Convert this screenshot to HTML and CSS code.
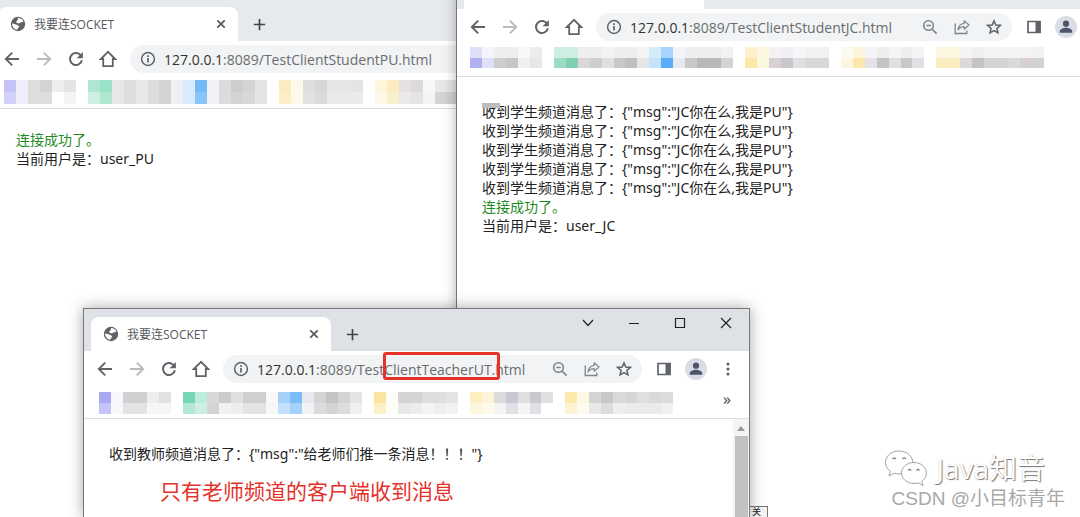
FILE: index.html
```html
<!DOCTYPE html>
<html lang="zh-CN">
<head>
<meta charset="utf-8">
<title>我要连SOCKET</title>
<link rel="stylesheet" href="styles.css">
</head>
<body>
<svg class="defs" aria-hidden="true">
  <symbol id="globe" viewBox="0 0 16 16"><circle cx="8" cy="8" r="7.2" fill="#5f6368"/><path d="M2 7.4c1.8-.2 2.6.9 4 1 1.500 0 1.300 1.200 2.600 1.400.9.200.5 1.600-.4 2.200-.7.500-.4 1.400-1.400 1.700C4 13 2 10.500 2 7.400zM8.200 1.900c2.300 0 4.500 1.400 5.400 3.600-1.400-.3-1.500 1-3 .9-1.200-.1-.8 1-2.100.9-1.200 0-2.400-.7-2.200-1.800.1-.8 1.200-.6 1.500-1.400.200-.8-.4-1.500.4-2.200z" fill="#fff"/></symbol>
  <symbol id="close" viewBox="0 0 16 16"><path d="M4.300 4.300l7.400 7.400M11.700 4.300l-7.400 7.400" stroke="currentColor" stroke-width="1.700"/></symbol>
  <symbol id="plus" viewBox="0 0 16 16"><path d="M8 2v12M2 8h12" stroke="currentColor" stroke-width="1.800"/></symbol>
  <symbol id="back" viewBox="0 0 16 16"><path d="M15 8H2M8.200 1.600L1.800 8l6.400 6.400" fill="none" stroke="currentColor" stroke-width="1.900"/></symbol>
  <symbol id="forward" viewBox="0 0 16 16"><path d="M1 8h13M7.800 1.600L14.200 8l-6.400 6.400" fill="none" stroke="currentColor" stroke-width="1.900"/></symbol>
  <symbol id="reload" viewBox="0 0 16 16"><path d="M13.300 5.200A6 6 0 1 0 13.900 9.200" fill="none" stroke="currentColor" stroke-width="2"/><path d="M14.900 1v6.300H8.600z" fill="currentColor"/></symbol>
  <symbol id="home" viewBox="0 0 18 18"><path d="M9 1.800L1.800 9h2.400v7.200h9.600V9h2.400z" fill="none" stroke="currentColor" stroke-width="1.800"/></symbol>
  <symbol id="info" viewBox="0 0 16 16"><circle cx="8" cy="8" r="6.400" fill="none" stroke="currentColor" stroke-width="1.500"/><path d="M8 7v4.600M8 4.300v1.700" stroke="currentColor" stroke-width="1.700"/></symbol>
  <symbol id="zoomout" viewBox="0 0 16 16"><circle cx="6.500" cy="6.500" r="4.800" fill="none" stroke="currentColor" stroke-width="1.600"/><path d="M10 10l4.600 4.600M4.200 6.500h4.600" stroke="currentColor" stroke-width="1.700"/></symbol>
  <symbol id="share" viewBox="0 0 16 16"><path d="M1.200 4.500v10h11.600v-3" fill="none" stroke="currentColor" stroke-width="1.300"/><path d="M10.200 1.800L15 6l-4.800 4.200V7.700C7.300 7.700 5.300 8.700 4 11c.3-3.700 2.500-6.300 6.200-6.700z" fill="none" stroke="currentColor" stroke-width="1.200" stroke-linejoin="round"/></symbol>
  <symbol id="star" viewBox="0 0 16 16"><path d="M8 1.900l1.800 4.100 4.500.4-3.400 3 1 4.400L8 11.500l-3.900 2.300 1-4.400-3.400-3 4.500-.4z" fill="none" stroke="currentColor" stroke-width="1.500"/></symbol>
  <symbol id="panel" viewBox="0 0 16 16"><path d="M2 2.500h12v11H2z" fill="none" stroke="currentColor" stroke-width="1.700"/><path d="M9.500 2h5v12h-5z" fill="currentColor"/></symbol>
  <symbol id="person" viewBox="0 0 22 22"><circle cx="11" cy="11" r="11" fill="#dadde5"/><circle cx="11" cy="7.700" r="3.100" fill="#4d5568"/><path d="M4.800 16.800v-1.500c0-2 3.800-3.500 6.200-3.500s6.200 1.500 6.200 3.500v1.500z" fill="#4d5568"/></symbol>
  <symbol id="dots" viewBox="0 0 16 16"><g fill="currentColor"><circle cx="8" cy="3" r="1.600"/><circle cx="8" cy="8" r="1.600"/><circle cx="8" cy="13" r="1.600"/></g></symbol>
  <symbol id="chevron" viewBox="0 0 16 16"><path d="M3 5l5 5.500L13 5" fill="none" stroke="currentColor" stroke-width="1.200"/></symbol>
  <symbol id="min" viewBox="0 0 16 16"><path d="M3 8.500h10" stroke="currentColor"/></symbol>
  <symbol id="max" viewBox="0 0 16 16"><path d="M3.500 3.500h9v9h-9z" fill="none" stroke="currentColor" stroke-width="1.200"/></symbol>
  <symbol id="quit" viewBox="0 0 16 16"><path d="M3 3l10 10M13 3L3 13" stroke="currentColor" stroke-width="1.200"/></symbol>
</svg>
<main class="desktop">

  <section class="window window-pu">
    <header class="tabstrip">
      <div class="tab"><svg class="icon"><use href="#globe"/></svg><span class="tab-title">我要连SOCKET</span><button class="tab-close" aria-label="关闭标签页"><svg class="icon"><use href="#close"/></svg></button></div>
      <button class="newtab" aria-label="新标签页"><svg class="icon"><use href="#plus"/></svg></button>
    </header>
    <nav class="toolbar">
      <button class="tool" aria-label="后退"><svg class="icon"><use href="#back"/></svg></button>
      <button class="tool off" aria-label="前进"><svg class="icon"><use href="#forward"/></svg></button>
      <button class="tool" aria-label="刷新"><svg class="icon"><use href="#reload"/></svg></button>
      <button class="tool" aria-label="主页"><svg class="icon home"><use href="#home"/></svg></button>
      <div class="omnibox"><svg class="icon"><use href="#info"/></svg><a class="url" href="#"><b>127.0.0.1</b>:8089/TestClientStudentPU.html</a></div>
    </nav>
    <div class="bookmarks"><svg class="mosaic" data-mosaic="pu"></svg></div>
    <article class="page">
      <p class="ok">连接成功了。</p>
      <p>当前用户是：user_PU</p>
    </article>
  </section>

  <section class="window window-jc">
    <header class="tabstrip"><div class="tab"></div></header>
    <nav class="toolbar">
      <button class="tool" aria-label="后退"><svg class="icon"><use href="#back"/></svg></button>
      <button class="tool off" aria-label="前进"><svg class="icon"><use href="#forward"/></svg></button>
      <button class="tool" aria-label="刷新"><svg class="icon"><use href="#reload"/></svg></button>
      <button class="tool" aria-label="主页"><svg class="icon home"><use href="#home"/></svg></button>
      <div class="omnibox"><svg class="icon"><use href="#info"/></svg><a class="url" href="#"><b>127.0.0.1</b>:8089/TestClientStudentJC.html</a>
        <button class="tool dim" aria-label="缩放"><svg class="icon"><use href="#zoomout"/></svg></button>
        <button class="tool dim" aria-label="分享"><svg class="icon"><use href="#share"/></svg></button>
        <button class="tool" aria-label="收藏"><svg class="icon"><use href="#star"/></svg></button>
      </div>
      <button class="tool after" aria-label="侧边栏"><svg class="icon"><use href="#panel"/></svg></button>
      <button class="tool" aria-label="用户"><svg class="icon avatar"><use href="#person"/></svg></button>
      <button class="tool" aria-label="菜单"><svg class="icon"><use href="#dots"/></svg></button>
    </nav>
    <div class="bookmarks"><svg class="mosaic" data-mosaic="jc"></svg></div>
    <article class="page">
      <span class="smudge"></span>
      <p>收到学生频道消息了：{"msg":"JC你在么,我是PU"}</p>
      <p>收到学生频道消息了：{"msg":"JC你在么,我是PU"}</p>
      <p>收到学生频道消息了：{"msg":"JC你在么,我是PU"}</p>
      <p>收到学生频道消息了：{"msg":"JC你在么,我是PU"}</p>
      <p>收到学生频道消息了：{"msg":"JC你在么,我是PU"}</p>
      <p class="ok">连接成功了。</p>
      <p>当前用户是：user_JC</p>
      <button class="page-button">关</button>
    </article>
  </section>

  <section class="window window-ut">
    <header class="tabstrip">
      <div class="tab"><svg class="icon"><use href="#globe"/></svg><span class="tab-title">我要连SOCKET</span><button class="tab-close" aria-label="关闭标签页"><svg class="icon"><use href="#close"/></svg></button></div>
      <button class="newtab" aria-label="新标签页"><svg class="icon"><use href="#plus"/></svg></button>
      <div class="controls">
        <button aria-label="搜索标签页"><svg class="icon"><use href="#chevron"/></svg></button>
        <button aria-label="最小化"><svg class="icon"><use href="#min"/></svg></button>
        <button aria-label="最大化"><svg class="icon"><use href="#max"/></svg></button>
        <button aria-label="关闭"><svg class="icon"><use href="#quit"/></svg></button>
      </div>
    </header>
    <nav class="toolbar">
      <button class="tool" aria-label="后退"><svg class="icon"><use href="#back"/></svg></button>
      <button class="tool off" aria-label="前进"><svg class="icon"><use href="#forward"/></svg></button>
      <button class="tool" aria-label="刷新"><svg class="icon"><use href="#reload"/></svg></button>
      <button class="tool" aria-label="主页"><svg class="icon home"><use href="#home"/></svg></button>
      <div class="omnibox"><svg class="icon"><use href="#info"/></svg><a class="url" href="#"><b>127.0.0.1</b>:8089/TestClientTeacherUT.html</a>
        <button class="tool dim" aria-label="缩放"><svg class="icon"><use href="#zoomout"/></svg></button>
        <button class="tool dim" aria-label="分享"><svg class="icon"><use href="#share"/></svg></button>
        <button class="tool" aria-label="收藏"><svg class="icon"><use href="#star"/></svg></button>
      </div>
      <button class="tool after" aria-label="侧边栏"><svg class="icon"><use href="#panel"/></svg></button>
      <button class="tool" aria-label="用户"><svg class="icon avatar"><use href="#person"/></svg></button>
      <button class="tool" aria-label="菜单"><svg class="icon"><use href="#dots"/></svg></button>
      <span class="highlight"></span>
    </nav>
    <div class="bookmarks"><svg class="mosaic" data-mosaic="ut"></svg><button class="more">»</button></div>
    <div class="viewport">
      <article class="page">
        <p>收到教师频道消息了：{"msg":"给老师们推一条消息！！！"}</p>
        <p class="note">只有老师频道的客户端收到消息</p>
      </article>
      <div class="scrollbar"><span class="arrow"></span><span class="thumb"></span></div>
    </div>
  </section>

  <aside class="watermark">
    <div class="brand">
      <svg class="wechat" viewBox="0 0 44 38"><g fill="#fff" stroke="#a4a4a4" stroke-width="1" stroke-linejoin="round"><path d="M15 2C7.300 2 1.500 7 1.500 13.500c0 3.700 2 6.700 5 8.800L5 27l5.300-2.800c1.500.4 3 .7 4.700.7 7.700 0 13.800-5 13.800-11.400S22.700 2 15 2z"/><path d="M30 13.500c-6.800 0-12.500 4.600-12.500 10.500S23.200 34.500 30 34.500c1.500 0 3-.2 4.200-.6L39 36.500l-1.300-4.200c2.800-2 4.700-4.800 4.700-8.300 0-5.900-5.600-10.500-12.400-10.500z"/></g><path d="M8.500 10.200q1.700-2.600 3.400 0M18.500 10.200q1.700-2.600 3.400 0M24.200 21.500q1.500-2.300 3 0M32.500 21.500q1.500-2.300 3 0" fill="none" stroke="#777" stroke-width="1.200"/></svg>
      <span>Java知音</span>
    </div>
    <div class="credit">CSDN @小目标青年</div>
  </aside>
</main>
<script src="mosaic.js"></script>
</body>
</html>
```
FILE: styles.css
```css
* { box-sizing: border-box; }
body { margin: 0; background: #fff; font-family: "Open Sans", "Noto Sans CJK SC", sans-serif; font-size: 14px; color: #222; }
button { border: 0; padding: 0; background: none; font: inherit; color: inherit; display: flex; align-items: center; justify-content: center; }
p { margin: 0; }
.defs { position: absolute; width: 0; height: 0; }
.icon { width: 16px; height: 16px; flex: none; display: block; }
.icon.home { width: 18px; height: 18px; }
.icon.avatar { width: 22px; height: 22px; }
.desktop { position: relative; height: 100vh; overflow: hidden; }

.window { position: absolute; bottom: 0; display: flex; flex-direction: column; background: #fff; border: 1px solid #777; border-bottom: 0; overflow: hidden; }
.window-pu { left: -10px; top: -2px; width: 667px; }
.window-jc { left: 456px; top: -34px; right: -40px; box-shadow: 0 0 12px rgba(0,0,0,.3); }
.window-ut { left: 83px; top: 308px; width: 667px; box-shadow: 0 0 14px rgba(0,0,0,.35); }

.tabstrip { display: flex; height: 42px; flex: none; padding: 8px 0 0 7px; background: #dee1e6; }
.window-pu .tabstrip, .window-jc .tabstrip { background: #e6e9ed; }
.tab { width: 240px; display: flex; align-items: center; padding: 0 9px 0 12px; background: #fff; border-radius: 8px 8px 0 0; color: #55585c; font-size: 12px; }
.tab-title { flex: 1; padding-left: 8px; }
.tab-close { width: 16px; height: 16px; }
.newtab { width: 28px; margin-left: 7px; color: #444; }
.newtab .icon { width: 15px; height: 15px; }
.controls { display: flex; margin-left: auto; height: 12px; }
.controls button { width: 46px; color: #222; }

.toolbar { position: relative; display: flex; align-items: center; height: 36px; flex: none; padding: 0 5px; color: #5f6368; }
.tool { width: 32px; height: 28px; flex: none; }
.off { color: #bbb; }
.dim { color: #80848a; }
.omnibox { flex: 1; display: flex; align-items: center; height: 28px; margin-left: 6px; padding: 0 2px 0 10px; border-radius: 14px; background: #f1f3f4; }
.url { flex: 1; padding-left: 8px; font-size: 14px; color: #6a6d70; text-decoration: none; white-space: nowrap; }
.url b { font-weight: normal; color: #333; }
.after { margin-left: 6px; }
.highlight { position: absolute; left: 299px; top: 1px; width: 117px; height: 28px; border: 3px solid #e4322b; border-radius: 3px; }

.bookmarks { display: flex; align-items: flex-start; justify-content: space-between; height: 32px; flex: none; padding: 3px 18px 0 13px; border-bottom: 1px solid #ddd; }
.mosaic { width: 574px; height: 24px; }
.window-jc .bookmarks { padding-top: 2px; }
.window-jc .mosaic { height: 21px; }
.window-ut .bookmarks { padding-left: 15px; padding-top: 5px; }
.window-ut .mosaic { height: 22px; }
.more { font-size: 16px; line-height: 14px; color: #444; }

.viewport { display: flex; flex: 1; min-height: 0; }
.page { position: relative; flex: 1; padding: 25px 25px 0; font-family: "Noto Sans", "Noto Sans CJK SC", sans-serif; line-height: 19px; }
.window-pu .page { padding-top: 21px; }
.ok { color: #1f8a24; }
.smudge { position: absolute; left: 25px; top: 26px; width: 18px; height: 5px; background: #bdbdbd; }
.page-button { width: 70px; height: 26px; margin: 271px 0 0 216px; border: 1px solid #777; background: #f4f4f4; font-size: 9px; line-height: 9px; align-items: flex-start; justify-content: flex-end; padding-right: 6px; }
.note { margin: 14px 0 0 51px; font-size: 21px; line-height: 28px; color: #e4322b; }
.scrollbar { width: 16px; flex: none; display: flex; flex-direction: column; align-items: center; background: #f4f4f4; }
.arrow { margin: 7px 0 5px; border: 4px solid transparent; border-top: 0; border-bottom: 5px solid #999; }
.thumb { width: 13px; flex: 1; background: #c1c1c1; }

.watermark { position: absolute; right: 15px; bottom: 6px; color: #fff; text-align: right; white-space: nowrap; }
.brand { display: flex; align-items: center; justify-content: flex-end; gap: 8px; padding-right: 20px; font-size: 28px; line-height: 36px; text-shadow: 1px 1px 1px #777, 0 0 1px #bbb; }
.wechat { width: 44px; height: 38px; }
.credit { font-family: "Liberation Sans", "Noto Sans CJK SC", sans-serif; font-size: 19px; line-height: 24px; color: #a8a8a8; }
```
FILE: mosaic.js
```js
// Each row lists up to 48 cells; "-" leaves a cell blank.
const rows = {
  pu: [
    "c3c3f5 f0eefc dddddd d3d3d3 eeeeee e4e4e4 - aee6d0 9be0c8 e8e6e6 dedede e8e6e8 dcdcdc d4d4d4 f0f0f4 d8eafc 74b8f8 f0f2f8 dcdcdc cfcccc d4d4d4 e4e4e4 - f9ecc0 fdf8e8 dedede d6d6d8 e6e6e6 e6e6e6 e4e4e4 - fdf5dc fbedc0 e4e0e0 dcdada f8f8f8 e8e8e8 e4e4e4",
    "d0d0fa f0eefc dddddd dddddd - f3f3f3 - cdeee0 b0e6d0 e8e6e6 dedede e8e6e8 dcdcdc d4d4d4 f0f0f4 d8eafc 86c4fa f0f2f8 dcdcdc d4d4d4 d8d8d8 e4e4e4 - fbeec4 fdf8e8 e2e2e2 dadadc eaeaea eaeaea eaeaea - fdf8e8 fbf0cc eae8e8 e6e4e4 f4f4f4 d4d4d4 d0d0d0"
  ],
  jc: [
    "e0dffa f4f4fa eeeeee eeeeee f8f8f8 ececec - ceeee2 ceeee2 eeeeee eeeeee f2f2f2 eeeeee eeeeee f4f4f4 d4ebfc a8d3fc f4f4f8 eeeeee eeeeee eeeeee f2f2f2 - fdf2cc fcf8e0 f4f0f4 f0f0f4 f6f6f6 f2f2f4 f2f2f4 - fcfaee fdf4dc f4f4f6 eeeeee f4f4f4 eeeeee f4f4f4 - fdf6e0 fdf6e0 f4f4f6 f0eef0 f4f4f6 f4f4f6 f4f4f6 f4f2f4 f2f2f4",
    "b0b0f5 e0e0fb cfcccf c6c6c6 f0f0f0 e8e6e6 - 9ddcc4 7fd0b0 dcd6d6 ceced0 e0e0e0 c8c8c8 c0c0c0 e6e6e6 c5e2fc 5aacf6 e6e9f0 c8c8c8 b8b8b8 b8b8b8 d4d4d4 - fce8a8 fcf8e0 d8d0d4 c8c8cc e0e0e0 d8d8d8 d8d8da - fcf6dc fce8ac e4e2e8 c4c4c4 dee0e0 c8c8c8 e0e0e4 - fbedc0 fbedc0 dcd8dc c6c2c4 d4d4d6 d4d4d6 dadadc d6d0d2 d2d2d4"
  ],
  ut: [
    "a8a8f4 f8f8fc d0d0d0 d0d0d0 eeeeee e2e2e2 - 76d6b8 bdecdc d8d8d8 cccccc e0e0e0 cfcfcf cfcfcf f8f8fa a4d0fa 7cbcf8 e8e8ee d4d4d4 c4c4c4 d4d4d4 e4e4e4 - fce4a0 fdfdf8 d4d4d4 d4d4d4 dedede dedede e4e4e4 - fcf0c0 fcf4d4 dcdadc c8c8d0 e0e0e0 c8c8d0 e0e0e0 - fce8a8 fdf8e4 d4d4d4 c8c8c8 dadada d6d6d6 e0e0e0 dadada dcdcdc",
    "c4c4f8 f8f8fc e4e4e4 e4e4e4 f6f6f6 f6f6f6 - b4e8d4 cdeee4 d4d4d4 f2f2f2 eeeeee e4e4e4 e4e2e2 f8f8fa c4e0fc a4d2fc f2f2f4 dcdcdc d4d4d4 dcdcdc f0f0f0 - fcf0c4 fdfdf8 e8e8e8 ececec f4f4f4 eeeeee f2f2f2 - fcf6dc fdf8e8 f4f4f4 e0e0e6 f4f4f4 e0e0e6 - - fdf4d4 fdfaf0 e8e8e8 dcdcdc eeeeee eaeaea eaeaea eaeaea f0f0f0"
  ]
};
for (const svg of document.querySelectorAll("[data-mosaic]")) {
  svg.setAttribute("viewBox", "0 0 48 2");
  svg.setAttribute("preserveAspectRatio", "none");
  svg.setAttribute("shape-rendering", "crispEdges");
  svg.innerHTML = rows[svg.dataset.mosaic].map((row, y) =>
    row.split(" ").map((c, x) => c === "-" ? "" :
      `<rect x="${x}" y="${y}" width="1" height="1" fill="#${c}"/>`).join("")).join("");
}
```
